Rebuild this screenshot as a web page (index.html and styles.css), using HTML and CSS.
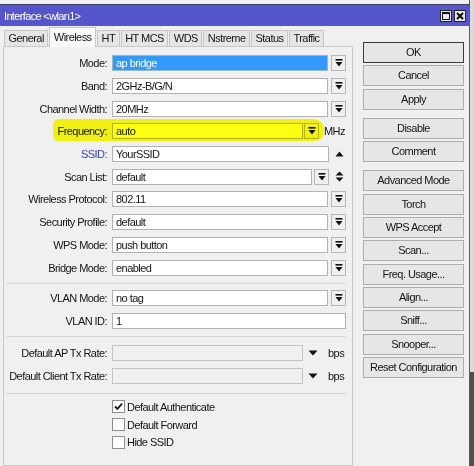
FILE: index.html
```html
<!DOCTYPE html>
<html lang="en">
<head>
    <meta charset="UTF-8">
    <meta name="viewport" content="width=device-width, initial-scale=1.0">
    <title>Interface &lt;wlan1&gt;</title>
    <link rel="stylesheet" href="styles.css">
</head>
<body>
    <div class="window">
        <div class="titlebar">
            <span class="title">Interface &lt;wlan1&gt;</span>
            <div class="title-btns">
                <span class="tbtn">
                    <svg width="10" height="10" viewBox="0 0 10 10"><rect x="1.5" y="1.5" width="7" height="7" fill="none" stroke="#111" stroke-width="1"/><rect x="1" y="1" width="8" height="2" fill="#111"/></svg>
                </span>
                <span class="tbtn">
                    <svg width="10" height="10" viewBox="0 0 10 10"><path d="M2 2L8 8M8 2L2 8" stroke="#111" stroke-width="2"/></svg>
                </span>
            </div>
        </div>

        <div class="client">
            <div class="tabs-area">
                <div class="tabs">
                    <span class="tab">General</span>
                    <span class="tab active">Wireless</span>
                    <span class="tab">HT</span>
                    <span class="tab">HT MCS</span>
                    <span class="tab">WDS</span>
                    <span class="tab">Nstreme</span>
                    <span class="tab">Status</span>
                    <span class="tab">Traffic</span>
                </div>

                <div class="panel">
                    <!-- marker stroke over the frequency row -->
                    <div class="marker"></div>

                    <div class="row">
                        <span class="label">Mode:</span>
                        <div class="ctl"><span class="field selected">ap bridge</span><span class="drop"><svg width="8" height="8" viewBox="0 0 8 8"><rect x="0.5" y="0" width="7" height="1.6"/><path d="M0.5 3h7L4 7.5z"/></svg></span></div>
                    </div>
                    <div class="row">
                        <span class="label">Band:</span>
                        <div class="ctl"><span class="field">2GHz-B/G/N</span><span class="drop"><svg width="8" height="8" viewBox="0 0 8 8"><rect x="0.5" y="0" width="7" height="1.6"/><path d="M0.5 3h7L4 7.5z"/></svg></span></div>
                    </div>
                    <div class="row">
                        <span class="label">Channel Width:</span>
                        <div class="ctl"><span class="field">20MHz</span><span class="drop"><svg width="8" height="8" viewBox="0 0 8 8"><rect x="0.5" y="0" width="7" height="1.6"/><path d="M0.5 3h7L4 7.5z"/></svg></span></div>
                    </div>
                    <div class="row">
                        <span class="label">Frequency:</span>
                        <div class="ctl"><span class="field short">auto</span><span class="drop tight"><svg width="8" height="8" viewBox="0 0 8 8"><rect x="0.5" y="0" width="7" height="1.6"/><path d="M0.5 3h7L4 7.5z"/></svg></span><span class="unit mhz">MHz</span></div>
                    </div>
                    <div class="row">
                        <span class="label ssid">SSID:</span>
                        <div class="ctl"><span class="field">YourSSID</span><span class="spin"><svg width="9" height="6" viewBox="0 0 9 6"><path d="M0.5 5.5h8L4.5 0.5z"/></svg></span></div>
                    </div>
                    <div class="row">
                        <span class="label">Scan List:</span>
                        <div class="ctl"><span class="field">default</span><span class="drop near"><svg width="8" height="8" viewBox="0 0 8 8"><rect x="0.5" y="0" width="7" height="1.6"/><path d="M0.5 3h7L4 7.5z"/></svg></span><span class="spin"><svg width="9" height="11" viewBox="0 0 9 11"><path d="M0.5 4.5h8L4.5 0.5z M0.5 6.5h8L4.5 10.5z"/></svg></span></div>
                    </div>
                    <div class="row">
                        <span class="label">Wireless Protocol:</span>
                        <div class="ctl"><span class="field">802.11</span><span class="drop"><svg width="8" height="8" viewBox="0 0 8 8"><rect x="0.5" y="0" width="7" height="1.6"/><path d="M0.5 3h7L4 7.5z"/></svg></span></div>
                    </div>
                    <div class="row">
                        <span class="label">Security Profile:</span>
                        <div class="ctl"><span class="field">default</span><span class="drop"><svg width="8" height="8" viewBox="0 0 8 8"><rect x="0.5" y="0" width="7" height="1.6"/><path d="M0.5 3h7L4 7.5z"/></svg></span></div>
                    </div>
                    <div class="row">
                        <span class="label">WPS Mode:</span>
                        <div class="ctl"><span class="field">push button</span><span class="drop"><svg width="8" height="8" viewBox="0 0 8 8"><rect x="0.5" y="0" width="7" height="1.6"/><path d="M0.5 3h7L4 7.5z"/></svg></span></div>
                    </div>
                    <div class="row">
                        <span class="label">Bridge Mode:</span>
                        <div class="ctl"><span class="field">enabled</span><span class="drop"><svg width="8" height="8" viewBox="0 0 8 8"><rect x="0.5" y="0" width="7" height="1.6"/><path d="M0.5 3h7L4 7.5z"/></svg></span></div>
                    </div>

                    <div class="sep sep-a"></div>

                    <div class="row">
                        <span class="label">VLAN Mode:</span>
                        <div class="ctl"><span class="field">no tag</span><span class="drop"><svg width="8" height="8" viewBox="0 0 8 8"><rect x="0.5" y="0" width="7" height="1.6"/><path d="M0.5 3h7L4 7.5z"/></svg></span></div>
                    </div>
                    <div class="row">
                        <span class="label">VLAN ID:</span>
                        <div class="ctl"><span class="field">1</span></div>
                    </div>

                    <div class="sep sep-b"></div>

                    <div class="row">
                        <span class="label">Default AP Tx Rate:</span>
                        <div class="ctl"><span class="field short off"></span><span class="arrow"><svg width="10" height="6" viewBox="0 0 10 6"><path d="M0.5 0.5h9L5 5.5z"/></svg></span><span class="unit bps">bps</span></div>
                    </div>
                    <div class="row">
                        <span class="label">Default Client Tx Rate:</span>
                        <div class="ctl"><span class="field short off"></span><span class="arrow"><svg width="10" height="6" viewBox="0 0 10 6"><path d="M0.5 0.5h9L5 5.5z"/></svg></span><span class="unit bps">bps</span></div>
                    </div>

                    <div class="sep sep-c"></div>

                    <div class="check">
                        <span class="box"><svg width="11" height="11" viewBox="0 0 11 11"><path d="M2 5.5L4.5 8L9 2.5" fill="none" stroke="#111" stroke-width="1.8"/></svg></span>
                        <span>Default Authenticate</span>
                    </div>
                    <div class="check">
                        <span class="box"></span>
                        <span>Default Forward</span>
                    </div>
                    <div class="check">
                        <span class="box"></span>
                        <span>Hide SSID</span>
                    </div>
                </div>
            </div>

            <div class="actions">
                <span class="btn default">OK</span>
                <span class="btn">Cancel</span>
                <span class="btn">Apply</span>
                <span class="btn group">Disable</span>
                <span class="btn">Comment</span>
                <span class="btn group">Advanced Mode</span>
                <span class="btn">Torch</span>
                <span class="btn">WPS Accept</span>
                <span class="btn">Scan...</span>
                <span class="btn">Freq. Usage...</span>
                <span class="btn">Align...</span>
                <span class="btn">Sniff...</span>
                <span class="btn">Snooper...</span>
                <span class="btn">Reset Configuration</span>
            </div>
        </div>
    </div>
    <div class="behind"></div>
</body>
</html>
```

FILE: styles.css
```css
/* Base */
* {
    box-sizing: border-box;
}

body {
    margin: 0;
    width: 474px;
    height: 466px;
    overflow: hidden;
    display: flex;
    background: #e4e4e4;
    font-family: 'Liberation Sans', Arial, sans-serif;
    font-size: 11px;
    letter-spacing: -0.55px;
    color: #151515;
}

/* Window frame */
.window {
    width: 470px;
    height: 466px;
    display: flex;
    flex-direction: column;
    background: #f0f0f0;
    border-right: 1px solid #5c5c5c;
}

.titlebar {
    margin-top: 4px;
    height: 22px;
    border-top: 1px solid #3e3e66;
    background: #5656cc;
    color: #fff;
    display: flex;
    align-items: center;
    justify-content: space-between;
    padding: 0 3px 0 4px;
}

.title {
    font-size: 11px;
    letter-spacing: -0.65px;
}

.title-btns {
    display: flex;
    gap: 2px;
}

.tbtn {
    width: 12px;
    height: 12px;
    background: #e8e8e8;
    border: 1px solid #222;
    display: flex;
    align-items: center;
    justify-content: center;
}

.client {
    flex: 1;
    display: flex;
    padding-left: 3px;
    min-height: 0;
}

/* Tabs */
.tabs-area {
    width: 350px;
    display: flex;
    flex-direction: column;
}

.tabs {
    height: 20px;
    display: flex;
    align-items: flex-end;
    padding-left: 1px;
}

.tab {
    height: 16px;
    line-height: 15px;
    padding: 0 3.5px;
    background: #e6e6e6;
    border: 1px solid #c6c6c6;
    border-bottom: none;
    margin-right: 1px;
}

.tab.active {
    height: 20px;
    line-height: 18px;
    margin-bottom: -1px;
    background: #f9f9f9;
    position: relative;
    z-index: 1;
}

.panel {
    flex: 1;
    position: relative;
    background: #f0f0f0;
    border: 1px solid #c8c8c8;
    padding: 5px 6px 0 0;
}

.marker {
    position: absolute;
    left: 49px;
    top: 72px;
    width: 271px;
    height: 22px;
    background: #ffff14;
    mix-blend-mode: multiply;
    border-radius: 6px 12px 10px 5px / 7px 9px 8px 6px;
    z-index: 2;
}

/* Form rows */
.row {
    height: 22.7px;
    display: grid;
    grid-template-columns: 104px 1fr;
    column-gap: 4px;
    align-items: center;
}

.label {
    text-align: right;
    padding-right: 1px;
    white-space: nowrap;
}

.label.ssid {
    color: #3a3acc;
}

.ctl {
    display: flex;
    align-items: center;
    height: 16px;
}

.field {
    flex: 1;
    height: 16px;
    line-height: 14px;
    padding: 0 3px;
    background: #fff;
    border: 1px solid #b2b2b2;
    white-space: nowrap;
}

.field.selected {
    background: #3399ff;
    color: #fff;
    border-color: #9bb;
}

.field.short {
    flex: none;
    width: 191px;
}

.field.off {
    background: #f0f0f0;
    border-color: #c4c4c4;
}

.drop {
    width: 15px;
    height: 16px;
    margin-left: 3px;
    background: #f0f0f0;
    border: 1px solid #b6b6b6;
    display: flex;
    align-items: center;
    justify-content: center;
    fill: #111;
}

.drop.tight {
    margin-left: 1px;
}

.drop.near {
    margin-left: 2px;
}

.spin {
    width: 14px;
    margin-left: 3px;
    display: flex;
    justify-content: center;
    fill: #111;
}

.arrow {
    width: 19px;
    display: flex;
    justify-content: center;
    fill: #111;
}

.unit.mhz {
    padding-left: 5px;
}

.unit.bps {
    padding-left: 6px;
}

.sep {
    height: 1px;
    background: #d6d6d6;
    margin-left: 2px;
}

.sep-a {
    margin-top: 4.5px;
    margin-bottom: 2.6px;
}

.sep-b {
    margin-top: 4px;
    margin-bottom: 4.6px;
}

.sep-c {
    margin-top: 6px;
    margin-bottom: 3.8px;
}

/* Checkboxes */
.check {
    height: 17.6px;
    display: flex;
    align-items: center;
    padding-left: 108px;
    gap: 2px;
}

.box {
    width: 13px;
    height: 13px;
    background: #fff;
    border: 1px solid #8e8e8e;
    display: flex;
    align-items: center;
    justify-content: center;
}

/* Command buttons */
.actions {
    width: 101px;
    margin-left: 10px;
    padding-top: 16px;
    display: flex;
    flex-direction: column;
}

.btn {
    height: 21px;
    line-height: 19px;
    margin-bottom: 2.4px;
    text-align: center;
    background: #e6e6e6;
    border: 1px solid #adadad;
    white-space: nowrap;
}

.btn.default {
    border-color: #3a3a3a;
}

.btn.group {
    margin-top: 5.6px;
}

/* Edge of the window behind */
.behind {
    flex: 1;
    background: linear-gradient(#dadada 0, #dadada 372px, #505050 372px);
}
```
